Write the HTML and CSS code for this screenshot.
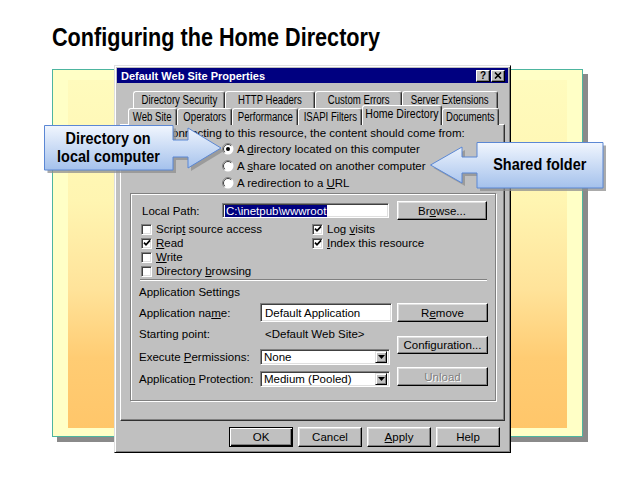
FILE: index.html
```html
<!DOCTYPE html>
<html lang="en">
<head>
<meta charset="utf-8">
<title>Configuring the Home Directory</title>
<link rel="stylesheet" href="styles.css">
</head>
<body>
<div class="slide">
  <h1 class="title"><span>Configuring the Home Directory</span></h1>

  <div class="backdrop"><div class="backdrop-fill"></div></div>

  <div class="dialog">
    <div class="titlebar">
      <span class="caption">Default Web Site Properties</span>
      <span class="tb-btns">
        <span class="tb-btn">?</span>
        <span class="tb-btn"><svg width="8" height="7" viewBox="0 0 8 7"><path d="M1 0.5 L7 6.5 M7 0.5 L1 6.5" stroke="#000" stroke-width="1.6" fill="none"/></svg></span>
      </span>
    </div>

    <div class="tabs">
      <div class="tabrow row1">
        <div class="tab"><span>Directory Security</span></div>
        <div class="tab"><span>HTTP Headers</span></div>
        <div class="tab"><span>Custom Errors</span></div>
        <div class="tab"><span>Server Extensions</span></div>
      </div>
      <div class="tabrow row2">
        <div class="tab"><span>Web Site</span></div>
        <div class="tab"><span>Operators</span></div>
        <div class="tab"><span>Performance</span></div>
        <div class="tab"><span>ISAPI Filters</span></div>
        <div class="tab active"><span>Home Directory</span></div>
        <div class="tab"><span>Documents</span></div>
      </div>
    </div>

    <div class="panel">
      <p class="lead">When connecting to this resource, the content should come from:</p>
      <div class="radios">
        <div class="radio-row">
          <svg class="radio" width="12" height="12" viewBox="0 0 12 12"><circle cx="6" cy="6" r="5.5" fill="#fff"/><path d="M2.1 9.9 A5.5 5.5 0 0 1 9.9 2.1" fill="none" stroke="#808080"/><path d="M2.8 9.2 A4.5 4.5 0 0 1 9.2 2.8" fill="none" stroke="#404040"/><circle cx="6" cy="6" r="2" fill="#000"/></svg>
          <span>A <u>d</u>irectory located on this computer</span>
        </div>
        <div class="radio-row">
          <svg class="radio" width="12" height="12" viewBox="0 0 12 12"><circle cx="6" cy="6" r="5.5" fill="#fff"/><path d="M2.1 9.9 A5.5 5.5 0 0 1 9.9 2.1" fill="none" stroke="#808080"/><path d="M2.8 9.2 A4.5 4.5 0 0 1 9.2 2.8" fill="none" stroke="#404040"/></svg>
          <span>A <u>s</u>hare located on another computer</span>
        </div>
        <div class="radio-row">
          <svg class="radio" width="12" height="12" viewBox="0 0 12 12"><circle cx="6" cy="6" r="5.5" fill="#fff"/><path d="M2.1 9.9 A5.5 5.5 0 0 1 9.9 2.1" fill="none" stroke="#808080"/><path d="M2.8 9.2 A4.5 4.5 0 0 1 9.2 2.8" fill="none" stroke="#404040"/></svg>
          <span>A redirection to a <u>U</u>RL</span>
        </div>
      </div>

      <div class="group">
        <div class="path-row">
          <span class="path-label">Local Path:</span>
          <span class="field path-box"><span class="sel">C:\inetpub\wwwroot</span></span>
          <span class="btn browse">Br<u>o</u>wse...</span>
        </div>

        <div class="checks">
          <div class="check-col left">
            <div class="check-row"><span class="cbox"></span><span>Scrip<u>t</u> source access</span></div>
            <div class="check-row"><span class="cbox"><svg width="8" height="8" viewBox="0 0 8 8"><path d="M1 3.6 L3 5.8 L7 1.4" stroke="#000" stroke-width="1.7" fill="none"/></svg></span><span><u>R</u>ead</span></div>
            <div class="check-row"><span class="cbox"></span><span><u>W</u>rite</span></div>
            <div class="check-row"><span class="cbox"></span><span>Directory <u>b</u>rowsing</span></div>
          </div>
          <div class="check-col">
            <div class="check-row"><span class="cbox"><svg width="8" height="8" viewBox="0 0 8 8"><path d="M1 3.6 L3 5.8 L7 1.4" stroke="#000" stroke-width="1.7" fill="none"/></svg></span><span>Log <u>v</u>isits</span></div>
            <div class="check-row"><span class="cbox"><svg width="8" height="8" viewBox="0 0 8 8"><path d="M1 3.6 L3 5.8 L7 1.4" stroke="#000" stroke-width="1.7" fill="none"/></svg></span><span><u>I</u>ndex this resource</span></div>
          </div>
        </div>

        <div class="sep"></div>

        <div class="app-title">Application Settings</div>

        <div class="app">
          <div class="app-fields">
            <div class="field-row row-name">
              <span class="lbl">Application na<u>m</u>e:</span>
              <span class="field name-box">Default Application</span>
            </div>
            <div class="field-row row-start">
              <span class="lbl">Starting point:</span>
              <span class="start-val">&lt;Default Web Site&gt;</span>
            </div>
            <div class="field-row row-exec">
              <span class="lbl">Execute <u>P</u>ermissions:</span>
              <span class="field select"><span>None</span><span class="select-arrow"><svg width="7" height="4" viewBox="0 0 7 4"><path d="M0 0 H7 L3.5 4 Z" fill="#000"/></svg></span></span>
            </div>
            <div class="field-row row-prot">
              <span class="lbl">Applicatio<u>n</u> Protection:</span>
              <span class="field select"><span>Medium (Pooled)</span><span class="select-arrow"><svg width="7" height="4" viewBox="0 0 7 4"><path d="M0 0 H7 L3.5 4 Z" fill="#000"/></svg></span></span>
            </div>
          </div>
          <div class="app-buttons">
            <span class="btn remove">R<u>e</u>move</span>
            <span class="btn config">Confi<u>g</u>uration...</span>
            <span class="btn unload">Unload</span>
          </div>
        </div>
      </div>
    </div>

    <div class="actions">
      <span class="btn default">OK</span>
      <span class="btn">Cancel</span>
      <span class="btn"><u>A</u>pply</span>
      <span class="btn">Help</span>
    </div>
  </div>

  <div class="callout callout-dir">
    <svg width="182" height="50" viewBox="0 0 182 50">
      <defs>
        <linearGradient id="cgDir" x1="0" y1="0" x2="0" y2="1">
          <stop offset="0" stop-color="#f1f6fe"/>
          <stop offset="1" stop-color="#a4c1ec"/>
        </linearGradient>
      </defs>
      <polygon points="3.5,3.5 132,3.5 132,18 147,18 147,6 180,26 147,46 147,35 132,35 132,48 3.5,48" fill="#8f8f8f" opacity="0.75"/>
      <polygon points="0.5,0.5 129,0.5 129,15 144,15 144,3 177,23 144,43 144,32 129,32 129,45 0.5,45" fill="url(#cgDir)" stroke="#5b87d4" stroke-width="1"/>
    </svg>
    <div class="callout-text"><span>Directory on</span><span>local computer</span></div>
  </div>

  <div class="callout callout-share">
    <svg width="180" height="52" viewBox="0 0 180 52">
      <defs>
        <linearGradient id="cgShare" x1="0" y1="0" x2="0" y2="1">
          <stop offset="0" stop-color="#f1f6fe"/>
          <stop offset="1" stop-color="#a4c1ec"/>
        </linearGradient>
      </defs>
      <polygon points="176,3.5 50,3.5 50,18 35,18 35,8 3.5,26 35,44 35,34 50,34 50,49 176,49" fill="#8f8f8f" opacity="0.75"/>
      <polygon points="173,0.5 47,0.5 47,15 32,15 32,5 0.5,23 32,41 32,31 47,31 47,46 173,46" fill="url(#cgShare)" stroke="#5b87d4" stroke-width="1"/>
    </svg>
    <div class="callout-text"><span>Shared folder</span></div>
  </div>
</div>
</body>
</html>
```

FILE: styles.css
```css
* { box-sizing: border-box; }
html, body { margin: 0; padding: 0; }
body {
  background: #fff;
  font-family: "Liberation Sans", Arial, sans-serif;
  color: #000;
}

.slide {
  position: relative;
  width: 638px;
  height: 478px;
  overflow: hidden;
  background: #fff;
}

.title {
  margin: 0;
  padding: 22px 0 0 52px;
  font-size: 25.5px;
  line-height: 30px;
  font-weight: bold;
  white-space: nowrap;
}
.title span {
  display: inline-block;
  transform: scaleX(0.848);
  transform-origin: 0 0;
}

/* slide backdrop behind the dialog */
.backdrop {
  position: absolute;
  left: 52px;
  top: 69px;
  width: 531px;
  height: 368px;
  background: #ffffc6;
  border: 1px solid #4db59f;
  box-shadow: 5px 5px 0 #8a8a8a;
  padding: 10px 15px 8px 15px;
}
.backdrop-fill {
  height: 100%;
  background: linear-gradient(to bottom, #fffbbd 0%, #fff5b1 35%, #ffe39a 60%, #ffcc73 80%, #ffc66a 100%);
}

/* dialog window */
.dialog {
  position: absolute;
  left: 114px;
  top: 65px;
  width: 397px;
  height: 388px;
  background: #c0c0c0;
  border: 1px solid;
  border-color: #dfdfdf #000 #000 #dfdfdf;
  box-shadow: inset 1px 1px 0 #fff, inset -1px -1px 0 #808080;
  padding: 2px;
  font-size: 11.5px;
  line-height: 14px;
}

.titlebar {
  height: 15px;
  background: #000080;
  color: #fff;
  display: flex;
  align-items: center;
  justify-content: space-between;
  padding: 0 3px 0 4px;
}
.caption {
  font-weight: bold;
  font-size: 11px;
  white-space: nowrap;
}
.tb-btns { display: flex; gap: 1px; }
.tb-btn {
  width: 14px;
  height: 12px;
  background: #c0c0c0;
  border: 1px solid;
  border-color: #fff #000 #000 #fff;
  box-shadow: inset -1px -1px 0 #808080;
  display: flex;
  align-items: center;
  justify-content: center;
  color: #000;
  font-weight: bold;
  font-size: 10px;
  line-height: 1;
}

/* tabs */
.tabs { margin-top: 8px; }
.tabrow { display: grid; }
.row1 {
  margin-left: 16px;
  height: 17px;
  grid-template-columns: 92px 90px 87px 96px;
}
.row2 {
  margin-left: 11px;
  height: 16px;
  grid-template-columns: 49px 55px 66px 64px 80px 57px;
}
.tab {
  background: #c0c0c0;
  border: 1px solid;
  border-bottom: 0;
  border-color: #fff #303030 #c0c0c0 #fff;
  border-radius: 3px 3px 0 0;
  box-shadow: inset -1px 0 0 #808080;
  display: flex;
  align-items: center;
  justify-content: center;
  font-size: 12px;
  white-space: nowrap;
}
.tab span {
  display: inline-block;
  transform: scaleX(0.8);
}
.tab.active {
  position: relative;
  z-index: 2;
  margin-top: -3px;
  height: 20px;
  font-size: 13.5px;
  padding-bottom: 3px;
}
.tab.active span { transform: scaleX(0.78); }

/* tab panel */
.panel {
  margin: 0 3px;
  height: 297px;
  border: 1px solid;
  border-color: #fff #303030 #303030 #fff;
  box-shadow: inset -1px -1px 0 #808080;
  padding-top: 1px;
}
.lead {
  margin: 0 0 0 12px;
  line-height: 14px;
  white-space: nowrap;
}
.radio-row {
  display: flex;
  align-items: center;
  gap: 3px;
  height: 17px;
  padding-left: 101px;
  white-space: nowrap;
}
.radio { flex: none; }

.group {
  margin: 2px 0 0 9px;
  width: 366px;
  height: 208px;
  border: 1px solid #808080;
  box-shadow: inset 1px 1px 0 #fff, 1px 1px 0 #fff;
}

/* common controls */
.field {
  background: #fff;
  border: 1px solid;
  border-color: #808080 #fff #fff #808080;
  box-shadow: inset 1px 1px 0 #404040, inset -1px -1px 0 #dfdfdf;
  white-space: nowrap;
}
.btn {
  background: #c0c0c0;
  border: 1px solid;
  border-color: #fff #000 #000 #fff;
  box-shadow: inset -1px -1px 0 #808080, inset 1px 1px 0 #dfdfdf;
  display: flex;
  align-items: center;
  justify-content: center;
  white-space: nowrap;
}

.path-row {
  display: flex;
  align-items: center;
  height: 19px;
  margin: 7px 0 0 11px;
}
.path-label { width: 80px; }
.path-box {
  width: 167px;
  height: 15px;
  display: flex;
  align-items: center;
  padding-left: 2px;
}
.sel {
  background: #000080;
  color: #fff;
  padding: 0 1px;
  line-height: 12px;
}
.browse {
  width: 90px;
  height: 19px;
  margin-left: 8px;
}

.checks {
  display: flex;
  margin: 2px 0 0 10px;
}
.check-col { display: flex; flex-direction: column; }
.check-col.left { width: 171px; }
.check-row {
  display: flex;
  align-items: center;
  gap: 4px;
  height: 14px;
  white-space: nowrap;
}
.cbox {
  flex: none;
  width: 11px;
  height: 11px;
  background: #fff;
  border: 1px solid;
  border-color: #808080 #fff #fff #808080;
  box-shadow: inset 1px 1px 0 #404040, inset -1px -1px 0 #dfdfdf;
  display: flex;
  align-items: center;
  justify-content: center;
}

.sep {
  margin: 1px 8px 0 9px;
  height: 2px;
  border-top: 1px solid #808080;
  border-bottom: 1px solid #fff;
}

.app-title {
  margin: 4px 0 0 8px;
  line-height: 14px;
}

.app {
  display: flex;
  margin: 4px 0 0 8px;
}
.app-fields { width: 253px; }
.field-row {
  display: flex;
  align-items: center;
  height: 16px;
  white-space: nowrap;
}
.field-row .lbl { width: 121px; flex: none; }
.row-name { height: 19px; }
.row-start { margin-top: 4px; }
.row-exec { margin-top: 7px; }
.row-prot { margin-top: 6px; }
.name-box {
  width: 132px;
  height: 19px;
  display: flex;
  align-items: center;
  padding-left: 4px;
}
.start-val { padding-left: 5px; }
.select {
  width: 130px;
  height: 16px;
  display: flex;
  align-items: center;
  justify-content: space-between;
  padding: 0 2px 0 3px;
}
.select-arrow {
  width: 12px;
  height: 12px;
  background: #c0c0c0;
  border: 1px solid;
  border-color: #dfdfdf #000 #000 #dfdfdf;
  box-shadow: inset 1px 1px 0 #fff, inset -1px -1px 0 #808080;
  display: flex;
  align-items: center;
  justify-content: center;
}

.app-buttons {
  display: flex;
  flex-direction: column;
  width: 91px;
  margin-left: 5px;
}
.remove { height: 19px; }
.config { height: 18px; margin-top: 14px; }
.unload {
  height: 19px;
  margin-top: 13px;
  color: #808080;
  text-shadow: 1px 1px 0 #fff;
}

.actions {
  display: flex;
  justify-content: flex-end;
  gap: 5px;
  margin: 6px 8px 0 0;
}
.actions .btn { width: 64px; height: 20px; }
.actions .btn.default {
  border-color: #000;
  box-shadow: inset 1px 1px 0 #fff, inset -1px -1px 0 #000, inset -2px -2px 0 #808080;
}

/* callouts on the slide */
.callout { position: absolute; }
.callout svg { position: absolute; left: 0; top: 0; }
.callout-text {
  position: absolute;
  top: 0;
  display: flex;
  flex-direction: column;
  align-items: center;
  justify-content: center;
  font-weight: bold;
  font-size: 17px;
  line-height: 18px;
  color: #000;
}
.callout-text span {
  display: inline-block;
  transform: scaleX(0.85);
  white-space: nowrap;
}
.callout-dir { left: 44px; top: 125px; width: 182px; height: 50px; }
.callout-dir .callout-text { left: 0; width: 129px; height: 45px; }
.callout-share { left: 430px; top: 142px; width: 180px; height: 52px; }
.callout-share .callout-text { left: 47px; width: 126px; height: 46px; }
```
